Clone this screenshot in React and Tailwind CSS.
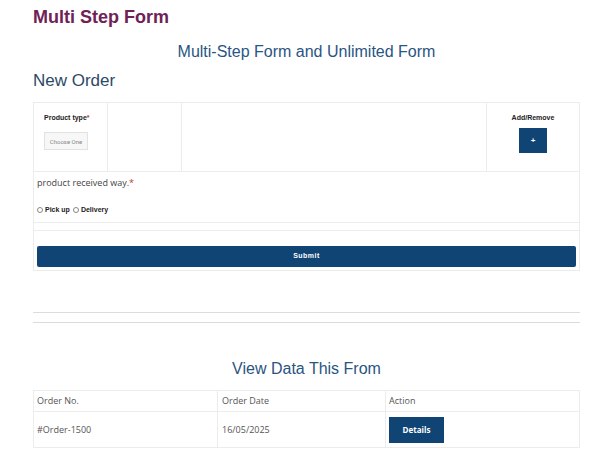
import React from 'react'

export default function App() {
  const [way, setWay] = React.useState('')
  return (
    <div className="w-[600px] h-[459px] bg-white overflow-hidden font-['Liberation_Sans',Arial,sans-serif]">
      <div className="ml-[33px] w-[547px]">
        <h1 className="pt-[6px] text-[18px] leading-[22px] font-bold text-[#6e2257]">Multi Step Form</h1>
        <h2 className="mt-[15px] text-center text-[16px] leading-[18px] text-[#2a5582]">Multi-Step Form and Unlimited Form</h2>
        <h3 className="mt-[10px] text-[17px] leading-[20px] text-[#2c4a66]">New Order</h3>

        {/* form box */}
        <div className="mt-[11px] border border-[#ececec]">
          <div className="flex h-[69px] border-b border-[#ececec]">
            <div className="w-[74px] border-r border-[#ececec] pl-[10px] pt-[11px]">
              <div className="text-[7px] leading-[8px] font-bold text-[#222]">
                Product type<span className="text-[#c0392b]">*</span>
              </div>
              <div className="mt-[10px] w-[44px] h-[18px] border border-[#e2e2e2] bg-[#f7f7f7] flex items-center justify-center text-[6px] text-[#888] font-['Roboto',sans-serif]">
                Choose One
              </div>
            </div>
            <div className="w-[74px] border-r border-[#ececec]"></div>
            <div className="flex-1 border-r border-[#ececec]"></div>
            <div className="w-[92px] flex flex-col items-center pt-[11px]">
              <div className="text-[7px] leading-[8px] font-bold text-[#222]">Add/Remove</div>
              <button className="mt-[6px] w-[28px] h-[25px] bg-[#0f4474] text-white text-[8px] font-bold flex items-center justify-center">+</button>
            </div>
          </div>

          <div className="px-[3px] pt-[5px] h-[51px] border-b border-[#ececec]">
            <div className="text-[9px] leading-[12px] text-[#444] font-['Open_Sans',sans-serif]">
              product received way.<span className="text-[#c0392b]">*</span>
            </div>
            <div className="mt-[16px] flex items-center gap-[2px] text-[7px] font-bold text-[#222]">
              <span onClick={() => setWay('pick')} className="w-[6px] h-[6px] rounded-full border border-[#888] inline-block"></span>
              <span>Pick up</span>
              <span onClick={() => setWay('delivery')} className="ml-[1px] w-[6px] h-[6px] rounded-full border border-[#888] inline-block"></span>
              <span>Delivery</span>
            </div>
          </div>

          <div className="h-[8px] border-b border-[#ececec]"></div>

          <div className="px-[3px] pt-[15px] pb-[3px]">
            <button className="block w-full h-[21px] rounded-[2px] bg-[#0f4474] text-white text-[7px] font-bold tracking-[0.5px]">
              Submit
            </button>
          </div>
        </div>

        <div className="mt-[41px] border-t border-[#dcdcdc]"></div>
        <div className="mt-[9px] border-t border-[#dcdcdc]"></div>

        <h2 className="mt-[37px] text-center text-[16px] leading-[18px] text-[#2a5582]">View Data This From</h2>

        {/* table */}
        <table className="mt-[12px] w-full border-collapse text-[9px] text-[#555] font-['Open_Sans',sans-serif]">
          <thead>
            <tr className="h-[21px]">
              <th className="w-[184px] border border-[#ececec] px-[3px] text-left font-normal">Order No.</th>
              <th className="w-[168px] border border-[#ececec] px-[4px] text-left font-normal">Order Date</th>
              <th className="border border-[#ececec] px-[3px] text-left font-normal">Action</th>
            </tr>
          </thead>
          <tbody>
            <tr className="h-[36px]">
              <td className="border border-[#ececec] px-[3px]">#Order-1500</td>
              <td className="border border-[#ececec] px-[4px]">16/05/2025</td>
              <td className="border border-[#ececec] px-[3px]">
                <button className="block w-[55px] h-[26px] bg-[#0f4474] text-white font-bold text-[8px]">Details</button>
              </td>
            </tr>
          </tbody>
        </table>
        {way && <span className="hidden">{way}</span>}
      </div>
    </div>
  )
}
